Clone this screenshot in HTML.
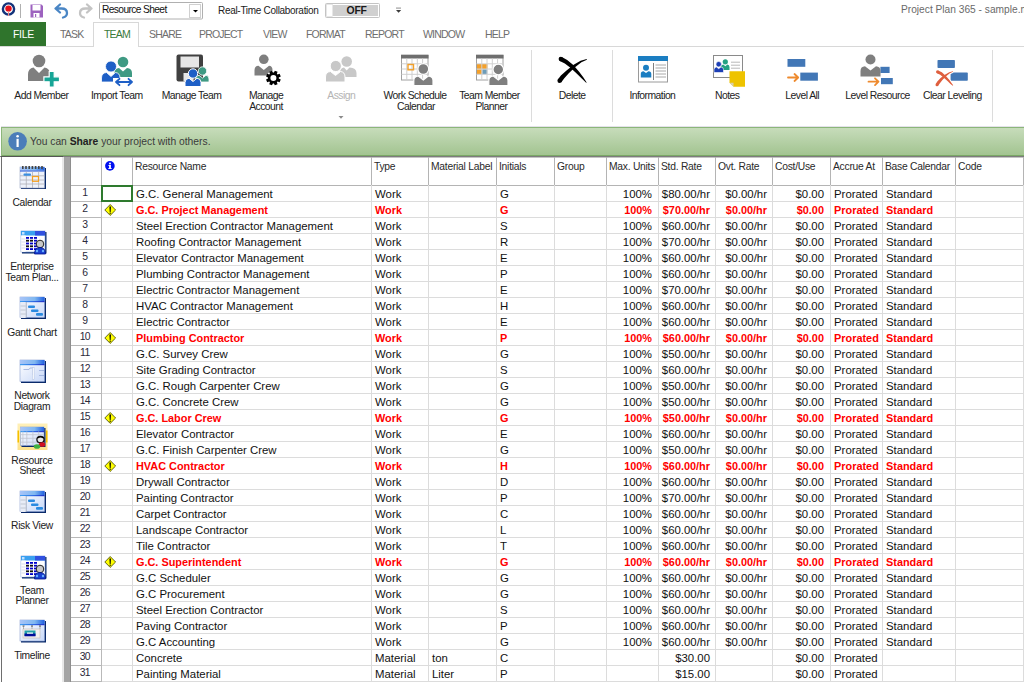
<!DOCTYPE html>
<html><head><meta charset="utf-8"><style>
html,body{margin:0;padding:0}
body{width:1024px;height:682px;overflow:hidden;position:relative;background:#fff;font-family:"Liberation Sans", sans-serif}
.t{position:absolute;white-space:nowrap;line-height:1;}
.r{position:absolute;}
.rl .c{width:200px;text-align:center;font-size:10.4px;letter-spacing:-0.55px;color:#222}
svg.r{overflow:visible}
</style></head><body>
<!-- title bar -->
<svg class="r" style="left:0;top:0" width="1024" height="130" viewBox="0 0 1024 130">
  <defs>
    <linearGradient id="gbar" x1="0" y1="0" x2="0" y2="1"><stop offset="0" stop-color="#c8ddbc"/><stop offset="1" stop-color="#a1c38f"/></linearGradient>
  </defs>
  <!-- logo -->
  <circle cx="8.5" cy="9" r="5.6" fill="none" stroke="#13337a" stroke-width="2.4"/>
  <circle cx="8.5" cy="8.6" r="3.2" fill="#e8101a"/>
  <rect x="8" y="11" width="1.1" height="5" fill="#e98a8a"/>
  <rect x="20" y="4" width="1" height="14" fill="#b0b0b0"/>
  <!-- save -->
  <path d="M30.5 4.5 h11 l1.5 1.5 v11.5 h-12.5 z" fill="#9d62bf"/>
  <rect x="32.5" y="5" width="8" height="5.5" fill="#fff"/>
  <rect x="33.5" y="13" width="6" height="4.5" fill="#fff"/>
  <rect x="35" y="14" width="1.2" height="3" fill="#9d62bf"/>
  <!-- undo -->
  <path d="M55.5 8.5 L60 4.5 M55.5 8.5 L60 12.5 M56 8.5 H61.5 C66 8.5 67 11 67 13 C67 15.5 65 17 63 17.5" fill="none" stroke="#4a86c5" stroke-width="2.3" stroke-linecap="round"/>
  <!-- redo -->
  <path d="M91.5 8.5 L87 4.5 M91.5 8.5 L87 12.5 M91 8.5 H85.5 C81 8.5 80 11 80 13 C80 15.5 82 17 84 17.5" fill="none" stroke="#c4c4c4" stroke-width="2.3" stroke-linecap="round"/>
  <!-- dropdown -->
  <rect x="99.5" y="2.5" width="103" height="16.5" rx="1" fill="#fff" stroke="#b0b0b0"/>
  <rect x="189.5" y="4.5" width="11" height="13" fill="#fff" stroke="#d0d0d0"/>
  <path d="M193 10 h5 l-2.5 2.5 z" fill="#000"/>
  <!-- toggle -->
  <rect x="325.5" y="3.5" width="54" height="14" rx="1" fill="#fff" stroke="#c4c4c4"/>
  <rect x="333" y="5" width="45" height="11" fill="#d0d0d0"/>
  <rect x="326.5" y="4.5" width="6" height="12" fill="#fff" stroke="#d8d8d8" stroke-width="0.6"/>
  <!-- qat customize -->
  <rect x="396" y="7.5" width="5" height="1.2" fill="#a0a0a0"/>
  <path d="M396 10 h5.2 l-2.6 2.8 z" fill="#3c3c3c"/>
  <!-- tabs -->
  <rect x="0" y="22" width="46" height="24" fill="#2f742c"/>
  <rect x="0" y="46" width="93" height="1" fill="#d8d8d8"/>
  <rect x="138" y="46" width="886" height="1" fill="#d8d8d8"/>
  <rect x="93" y="22" width="1" height="25" fill="#d8d8d8"/>
  <rect x="138" y="22" width="1" height="25" fill="#d8d8d8"/>
  <rect x="93" y="22" width="46" height="1" fill="#d8d8d8"/>
  <!-- ribbon separators -->
  <rect x="531" y="50" width="1" height="72" fill="#dcdcdc"/>
  <rect x="612" y="50" width="1" height="72" fill="#dcdcdc"/>
  <rect x="992" y="50" width="1" height="72" fill="#dcdcdc"/>

  <!-- Add Member -->
  <circle cx="39" cy="61" r="6.3" fill="#7f7f7f"/>
  <path d="M28 81 V74.5 Q28 68.5 33.5 67.5 L39 73 L44.5 67.5 Q50 68.5 50 74.5 V81 Z" fill="#7f7f7f"/>
  <path d="M49.2 71.5 h5 v5.3 h5.3 v5 h-5.3 v5.3 h-5 v-5.3 h-5.3 v-5 h5.3 z" fill="#17a596" stroke="#fff" stroke-width="1.2"/>
  <!-- Import Team -->
  <circle cx="123" cy="62" r="5.3" fill="#3f9a83"/>
  <path d="M114.5 77 V73 Q114.5 68.5 119 68 L123 71.5 L127 68 Q132 68.5 132 73 V77 Z" fill="#3f9a83"/>
  <circle cx="111" cy="66.5" r="5.5" fill="#1e5fc6" stroke="#fff" stroke-width="0.8"/>
  <path d="M101.5 82 V78 Q101.5 73 106.5 72.5 L111 76.5 L115.5 72.5 Q120 73 120 78 V82 Z" fill="#1e5fc6" stroke="#fff" stroke-width="0.8"/>
  <rect x="113" y="78" width="22" height="8" fill="#fff"/>
  <path d="M116 82 H132 M119.5 78.8 L116 82 L119.5 85.2 M128.5 78.8 L132 82 L128.5 85.2" fill="none" stroke="#1e5fc6" stroke-width="1.8" stroke-linecap="round" stroke-linejoin="round"/>
  <!-- Manage Team -->
  <rect x="176.5" y="54.5" width="26.5" height="27" rx="2" fill="#404040"/>
  <rect x="180.5" y="56.5" width="18.5" height="11" fill="#e6e6e6"/>
  <rect x="183.5" y="73" width="10" height="8.5" fill="#e6e6e6"/>
  <circle cx="202.5" cy="71" r="4.2" fill="#3f9a83" stroke="#fff" stroke-width="0.8"/>
  <path d="M195.5 82 V79 Q195.5 75.5 199 75.3 L202.5 78 L206 75.3 Q209 75.5 209 79 V82 Z" fill="#3f9a83" stroke="#fff" stroke-width="0.8"/>
  <circle cx="193" cy="73.5" r="4.7" fill="#1e5fc6" stroke="#fff" stroke-width="1"/>
  <path d="M185 86.5 V82.5 Q185 78.5 189 78.2 L193 81.5 L197 78.2 Q201 78.5 201 82.5 V86.5 Z" fill="#1e5fc6" stroke="#fff" stroke-width="1"/>
  <!-- Manage Account -->
  <circle cx="263.8" cy="59.3" r="4.8" fill="#7f7f7f"/>
  <path d="M254.5 75.5 V70 Q254.5 66 258.5 65.8 L263.8 70 L269 65.8 Q272.5 66 272.5 70 V75.5 Z" fill="#7f7f7f"/>
  <g transform="translate(273.4 78)">
    <circle r="7.2" fill="#fff"/>
    <path d="M0.50 -5.38 L1.44 -7.36 L4.19 -6.22 L3.45 -4.16 L4.16 -3.45 L6.22 -4.19 L7.36 -1.44 L5.38 -0.50 L5.38 0.50 L7.36 1.44 L6.22 4.19 L4.16 3.45 L3.45 4.16 L4.19 6.22 L1.44 7.36 L0.50 5.38 L-0.50 5.38 L-1.44 7.36 L-4.19 6.22 L-3.45 4.16 L-4.16 3.45 L-6.22 4.19 L-7.36 1.44 L-5.38 0.50 L-5.38 -0.50 L-7.36 -1.44 L-6.22 -4.19 L-4.16 -3.45 L-3.45 -4.16 L-4.19 -6.22 L-1.44 -7.36 L-0.50 -5.38 Z" fill="#000"/>
    <circle r="3" fill="#fff"/>
  </g>
  <!-- Assign -->
  <circle cx="346.7" cy="61.5" r="5.3" fill="#c8c8c8"/>
  <path d="M340 77 V73 Q340 68 344 67.6 L346.7 70.5 L349.5 67.6 Q356.5 68 356.5 73 V77 Z" fill="#c8c8c8"/>
  <circle cx="335.8" cy="66" r="5.6" fill="#c8c8c8" stroke="#fff" stroke-width="1"/>
  <path d="M325.5 82 V77 Q325.5 72 330.5 71.5 L335.5 75.5 L340.5 71.5 Q345 72 345 77 V82 Z" fill="#c8c8c8" stroke="#fff" stroke-width="1"/>
  <path d="M338.5 116 h5 l-2.5 2.8 z" fill="#8a8a8a"/>
  <!-- Work Schedule Calendar -->
  <rect x="401.5" y="55" width="26.5" height="25" fill="#fff" stroke="#a0a0a0" stroke-width="1"/>
  <rect x="401" y="55" width="27.5" height="3.5" fill="#6e6e6e"/>
  <path d="M406.8 58.5 V80 M412 58.5 V80 M417.3 58.5 V80 M422.6 58.5 V80 M401.5 63.8 H428 M401.5 69 H428 M401.5 74.3 H428" stroke="#cfcfcf" stroke-width="1"/>
  <rect x="408" y="64.5" width="5.5" height="5.3" fill="none" stroke="#f2a02a" stroke-width="1.4"/>
  <circle cx="423.3" cy="69" r="5.4" fill="#7f7f7f" stroke="#fff" stroke-width="1.2"/>
  <path d="M413.8 85.5 V80.5 Q413.8 76.5 418.3 76 L423.3 80 L428.3 76 Q433 76.5 433 80.5 V85.5 Z" fill="#7f7f7f" stroke="#fff" stroke-width="1.2"/>
  <!-- Team Member Planner -->
  <rect x="476.5" y="55" width="26.5" height="25" fill="#fff" stroke="#a0a0a0" stroke-width="1"/>
  <rect x="476" y="55" width="27.5" height="3.5" fill="#6e6e6e"/>
  <rect x="477" y="64" width="10.5" height="5" fill="#f4a02a"/>
  <rect x="477" y="69.3" width="5" height="5" fill="#f4a02a"/>
  <rect x="482.3" y="69.3" width="5" height="5" fill="#6d9cb8"/>
  <path d="M481.8 58.5 V80 M487 58.5 V80 M492.3 58.5 V80 M497.6 58.5 V80 M476.5 63.8 H503 M476.5 69 H503 M476.5 74.3 H503" stroke="#d0d0d0" stroke-width="1"/>
  <circle cx="498.3" cy="69.5" r="5.3" fill="#7f7f7f" stroke="#fff" stroke-width="1.2"/>
  <path d="M488.8 85.5 V80.5 Q488.8 76.5 493.3 76 L498.3 80 L503.3 76 Q508 76.5 508 80.5 V85.5 Z" fill="#7f7f7f" stroke="#fff" stroke-width="1.2"/>
  <!-- Delete -->
  <path d="M559.76 60.94 L564.83 63.54 L570.72 67.90 L576.90 73.82 L581.74 78.45 L586.13 82.82 L586.67 82.38 L583.26 77.15 L579.10 71.78 L573.28 65.10 L567.17 60.06 L561.84 57.06 Z" fill="#000"/><circle cx="560.8" cy="59" r="2.2" fill="#000"/><path d="M586.67 58.97 L580.60 60.85 L573.65 64.69 L566.24 70.65 L560.90 75.56 L557.85 79.47 L561.35 82.13 L564.10 78.44 L568.76 73.35 L575.35 66.91 L581.40 62.35 L586.93 59.63 Z" fill="#000"/><circle cx="559.6" cy="80.8" r="2.2" fill="#000"/>
  <!-- Information -->
  <rect x="638.5" y="56.5" width="29" height="25.5" fill="#fff" stroke="#9a9a9a"/>
  <rect x="638" y="56" width="30" height="5" fill="#1b7ec2"/>
  <circle cx="646" cy="67.8" r="3" fill="#1b7ec2"/>
  <path d="M640.8 77.5 V74 Q640.8 71.3 643.5 71.2 L646 73 L648.5 71.2 Q651.3 71.3 651.3 74 V77.5 Z" fill="#1b7ec2"/>
  <rect x="653" y="63" width="1" height="17" fill="#808080"/>
  <path d="M655.5 65 H666 M655.5 68 H666 M655.5 71 H666 M655.5 74 H666 M655.5 77 H666" stroke="#a8a8a8" stroke-width="1"/>
  <!-- Notes -->
  <rect x="713.5" y="55.5" width="29" height="22" fill="#fff" stroke="#8a8a8a"/>
  <circle cx="725.3" cy="61.8" r="2.6" fill="#24a182"/>
  <path d="M721 70 V67 Q721 64.8 723.3 64.6 L725.3 66.3 L727.3 64.6 Q729.5 64.8 729.5 67 V70 Z" fill="#24a182"/>
  <circle cx="718.7" cy="64.2" r="2.7" fill="#1d3fb5" stroke="#fff" stroke-width="0.6"/>
  <path d="M714 72.5 V69.5 Q714 67.2 716.5 67 L718.7 68.7 L721 67 Q723.5 67.2 723.5 69.5 V72.5 Z" fill="#1d3fb5" stroke="#fff" stroke-width="0.6"/>
  <path d="M731 62.2 H740 M731 65.2 H740 M731 68.2 H740" stroke="#b8b8b8" stroke-width="1"/>
  <path d="M729.5 71.2 H745 V86.7 H733.5 L729.5 82.7 Z" fill="#eec300"/>
  <path d="M729.5 82.7 H733.5 V86.7 Z" fill="#d8d0b0"/>
  <!-- Level All -->
  <rect x="787.5" y="59" width="17.8" height="7.8" fill="#4277b6"/>
  <rect x="800.3" y="72.6" width="17.6" height="8.1" fill="#4277b6"/>
  <path d="M788 77.5 H798 M794.5 74 L798.2 77.5 L794.5 81" fill="none" stroke="#ee8a2e" stroke-width="1.8" stroke-linecap="round" stroke-linejoin="round"/>
  <!-- Level Resource -->
  <rect x="880.4" y="66.8" width="9.2" height="6.2" fill="#4277b6"/>
  <rect x="881" y="78" width="11.8" height="6.2" fill="#4277b6"/>
  <circle cx="870.5" cy="59.5" r="5" fill="#7f7f7f"/>
  <path d="M860.5 76.5 V71 Q860.5 66.5 865 66.2 L870.5 70.5 L876 66.2 Q880.5 66.5 880.5 71 V76.5 Z" fill="#7f7f7f"/>
  <path d="M868.5 81.7 H878.3 M875 78.3 L878.5 81.7 L875 85.1" fill="none" stroke="#ee8a2e" stroke-width="1.8" stroke-linecap="round" stroke-linejoin="round"/>
  <!-- Clear Leveling -->
  <rect x="937.5" y="60" width="17.4" height="8" rx="0.8" fill="#4277b6"/>
  <rect x="950.6" y="72.6" width="17.2" height="8.1" rx="0.8" fill="#4277b6"/>
  <path d="M936.41 74.05 L939.60 75.51 L943.43 78.68 L947.03 81.86 L949.77 84.60 L952.12 86.38 L953.88 84.62 L952.23 82.40 L949.97 79.14 L946.57 75.32 L942.40 71.49 L938.59 69.55 Z" fill="#fff"/><circle cx="937.5" cy="71.8" r="2.5" fill="#fff"/><path d="M952.59 70.42 L948.76 71.38 L944.27 73.92 L939.87 77.37 L936.52 80.97 L934.91 83.43 L939.09 86.17 L940.48 84.03 L943.13 80.63 L946.73 77.08 L950.24 74.22 L953.41 72.78 Z" fill="#fff"/><circle cx="937" cy="84.8" r="2.5" fill="#fff"/><path d="M936.84 73.15 L940.17 74.69 L944.11 77.95 L947.77 81.18 L950.52 83.93 L952.82 85.68 L953.18 85.32 L951.48 83.07 L949.23 79.82 L945.89 76.05 L941.83 72.31 L938.16 70.45 Z" fill="#df5f3e"/><circle cx="937.5" cy="71.8" r="1.5" fill="#df5f3e"/><path d="M952.92 71.36 L949.22 72.27 L944.89 74.71 L940.58 78.08 L937.31 81.58 L935.74 83.98 L938.26 85.62 L939.69 83.42 L942.42 79.92 L946.11 76.29 L949.78 73.33 L953.08 71.84 Z" fill="#df5f3e"/><circle cx="937" cy="84.8" r="1.5" fill="#df5f3e"/>

  <!-- info bar -->
  <rect x="1" y="126" width="1023" height="1" fill="#e4e2ea"/>
  <rect x="1" y="127" width="1023" height="29" fill="url(#gbar)"/>
  <rect x="1" y="127" width="1023" height="1" fill="#8cb67a"/>
  <rect x="1" y="155" width="1023" height="1" fill="#7aa865"/>
  <rect x="1" y="127" width="1" height="29" fill="#8cb67a"/>
  <circle cx="17.6" cy="141.3" r="9.3" fill="#4b7db9"/>
  <circle cx="17.6" cy="136.3" r="1.3" fill="#fff"/>
  <rect x="16.5" y="138.8" width="2.2" height="8.2" fill="#fff"/>
</svg>
<div class="t" style="left:102px;top:5px;font-size:10.2px;color:#111;letter-spacing:-0.6px">Resource Sheet</div>
<div class="t" style="left:218px;top:6.2px;font-size:10px;color:#222;letter-spacing:-0.3px">Real-Time Collaboration</div>
<div class="t" style="left:346.5px;top:5.9px;font-size:10.4px;color:#1a1a1a;font-weight:bold;letter-spacing:-0.2px">OFF</div>
<div class="t" style="left:901px;top:4.8px;font-size:10.2px;color:#6a6a6a">Project Plan 365 - sample.m</div>
<div class="t" style="left:13px;top:29px;font-size:10.5px;color:#fff;letter-spacing:-0.3px">FILE</div>
<div class="t" style="left:60px;top:29px;font-size:10.5px;color:#6e6e6e;letter-spacing:-0.8px">TASK</div>
<div class="t" style="left:104px;top:29px;font-size:10.5px;color:#3b7a3a;letter-spacing:-0.8px">TEAM</div>
<div class="t" style="left:149px;top:29px;font-size:10.5px;color:#6e6e6e;letter-spacing:-0.8px">SHARE</div>
<div class="t" style="left:199px;top:29px;font-size:10.5px;color:#6e6e6e;letter-spacing:-0.8px">PROJECT</div>
<div class="t" style="left:263px;top:29px;font-size:10.5px;color:#6e6e6e;letter-spacing:-0.8px">VIEW</div>
<div class="t" style="left:306px;top:29px;font-size:10.5px;color:#6e6e6e;letter-spacing:-0.8px">FORMAT</div>
<div class="t" style="left:365px;top:29px;font-size:10.5px;color:#6e6e6e;letter-spacing:-0.8px">REPORT</div>
<div class="t" style="left:423px;top:29px;font-size:10.5px;color:#6e6e6e;letter-spacing:-0.8px">WINDOW</div>
<div class="t" style="left:485px;top:29px;font-size:10.5px;color:#6e6e6e;letter-spacing:-0.8px">HELP</div>
<div class="rl">
<div class="t c" style="left:-58.7px;top:91px">Add Member</div>
<div class="t c" style="left:16.8px;top:91px">Import Team</div>
<div class="t c" style="left:91.5px;top:91px">Manage Team</div>
<div class="t c" style="left:166px;top:91px">Manage</div>
<div class="t c" style="left:166px;top:101.7px">Account</div>
<div class="t c" style="left:241.3px;top:91px;color:#b4b4b4">Assign</div>
<div class="t c" style="left:315px;top:91px">Work Schedule</div>
<div class="t c" style="left:316px;top:101.7px">Calendar</div>
<div class="t c" style="left:389.4px;top:91px">Team Member</div>
<div class="t c" style="left:391.4px;top:101.7px">Planner</div>
<div class="t c" style="left:472.2px;top:91px">Delete</div>
<div class="t c" style="left:552.4px;top:91px">Information</div>
<div class="t c" style="left:627.3px;top:91px">Notes</div>
<div class="t c" style="left:702.2px;top:91px">Level All</div>
<div class="t c" style="left:777.6px;top:91px">Level Resource</div>
<div class="t c" style="left:852.4px;top:91px">Clear Leveling</div>
</div>
<div class="t" style="left:30px;top:137.4px;font-size:10.3px;color:#3a3a3a">You can <b style="color:#222">Share</b> your project with others.</div>

<div class="r" style="left:71px;top:157px;width:953px;height:525px;background:#fff;"></div>
<div class="r" style="left:0px;top:156px;width:1024px;height:1px;background:#7c7c7c;"></div>
<div class="r" style="left:70px;top:157px;width:954px;height:1px;background:#c4c4c4;"></div>
<div class="r" style="left:101px;top:201px;width:923px;height:1px;background:#dcdcdc;"></div>
<div class="r" style="left:71px;top:201px;width:30px;height:1px;background:#b9b9b9;"></div>
<div class="r" style="left:101px;top:217px;width:923px;height:1px;background:#dcdcdc;"></div>
<div class="r" style="left:71px;top:217px;width:30px;height:1px;background:#b9b9b9;"></div>
<div class="r" style="left:101px;top:233px;width:923px;height:1px;background:#dcdcdc;"></div>
<div class="r" style="left:71px;top:233px;width:30px;height:1px;background:#b9b9b9;"></div>
<div class="r" style="left:101px;top:249px;width:923px;height:1px;background:#dcdcdc;"></div>
<div class="r" style="left:71px;top:249px;width:30px;height:1px;background:#b9b9b9;"></div>
<div class="r" style="left:101px;top:265px;width:923px;height:1px;background:#dcdcdc;"></div>
<div class="r" style="left:71px;top:265px;width:30px;height:1px;background:#b9b9b9;"></div>
<div class="r" style="left:101px;top:281px;width:923px;height:1px;background:#dcdcdc;"></div>
<div class="r" style="left:71px;top:281px;width:30px;height:1px;background:#b9b9b9;"></div>
<div class="r" style="left:101px;top:297px;width:923px;height:1px;background:#dcdcdc;"></div>
<div class="r" style="left:71px;top:297px;width:30px;height:1px;background:#b9b9b9;"></div>
<div class="r" style="left:101px;top:313px;width:923px;height:1px;background:#dcdcdc;"></div>
<div class="r" style="left:71px;top:313px;width:30px;height:1px;background:#b9b9b9;"></div>
<div class="r" style="left:101px;top:329px;width:923px;height:1px;background:#dcdcdc;"></div>
<div class="r" style="left:71px;top:329px;width:30px;height:1px;background:#b9b9b9;"></div>
<div class="r" style="left:101px;top:345px;width:923px;height:1px;background:#dcdcdc;"></div>
<div class="r" style="left:71px;top:345px;width:30px;height:1px;background:#b9b9b9;"></div>
<div class="r" style="left:101px;top:361px;width:923px;height:1px;background:#dcdcdc;"></div>
<div class="r" style="left:71px;top:361px;width:30px;height:1px;background:#b9b9b9;"></div>
<div class="r" style="left:101px;top:377px;width:923px;height:1px;background:#dcdcdc;"></div>
<div class="r" style="left:71px;top:377px;width:30px;height:1px;background:#b9b9b9;"></div>
<div class="r" style="left:101px;top:393px;width:923px;height:1px;background:#dcdcdc;"></div>
<div class="r" style="left:71px;top:393px;width:30px;height:1px;background:#b9b9b9;"></div>
<div class="r" style="left:101px;top:409px;width:923px;height:1px;background:#dcdcdc;"></div>
<div class="r" style="left:71px;top:409px;width:30px;height:1px;background:#b9b9b9;"></div>
<div class="r" style="left:101px;top:425px;width:923px;height:1px;background:#dcdcdc;"></div>
<div class="r" style="left:71px;top:425px;width:30px;height:1px;background:#b9b9b9;"></div>
<div class="r" style="left:101px;top:441px;width:923px;height:1px;background:#dcdcdc;"></div>
<div class="r" style="left:71px;top:441px;width:30px;height:1px;background:#b9b9b9;"></div>
<div class="r" style="left:101px;top:457px;width:923px;height:1px;background:#dcdcdc;"></div>
<div class="r" style="left:71px;top:457px;width:30px;height:1px;background:#b9b9b9;"></div>
<div class="r" style="left:101px;top:473px;width:923px;height:1px;background:#dcdcdc;"></div>
<div class="r" style="left:71px;top:473px;width:30px;height:1px;background:#b9b9b9;"></div>
<div class="r" style="left:101px;top:489px;width:923px;height:1px;background:#dcdcdc;"></div>
<div class="r" style="left:71px;top:489px;width:30px;height:1px;background:#b9b9b9;"></div>
<div class="r" style="left:101px;top:505px;width:923px;height:1px;background:#dcdcdc;"></div>
<div class="r" style="left:71px;top:505px;width:30px;height:1px;background:#b9b9b9;"></div>
<div class="r" style="left:101px;top:521px;width:923px;height:1px;background:#dcdcdc;"></div>
<div class="r" style="left:71px;top:521px;width:30px;height:1px;background:#b9b9b9;"></div>
<div class="r" style="left:101px;top:537px;width:923px;height:1px;background:#dcdcdc;"></div>
<div class="r" style="left:71px;top:537px;width:30px;height:1px;background:#b9b9b9;"></div>
<div class="r" style="left:101px;top:553px;width:923px;height:1px;background:#dcdcdc;"></div>
<div class="r" style="left:71px;top:553px;width:30px;height:1px;background:#b9b9b9;"></div>
<div class="r" style="left:101px;top:569px;width:923px;height:1px;background:#dcdcdc;"></div>
<div class="r" style="left:71px;top:569px;width:30px;height:1px;background:#b9b9b9;"></div>
<div class="r" style="left:101px;top:585px;width:923px;height:1px;background:#dcdcdc;"></div>
<div class="r" style="left:71px;top:585px;width:30px;height:1px;background:#b9b9b9;"></div>
<div class="r" style="left:101px;top:601px;width:923px;height:1px;background:#dcdcdc;"></div>
<div class="r" style="left:71px;top:601px;width:30px;height:1px;background:#b9b9b9;"></div>
<div class="r" style="left:101px;top:617px;width:923px;height:1px;background:#dcdcdc;"></div>
<div class="r" style="left:71px;top:617px;width:30px;height:1px;background:#b9b9b9;"></div>
<div class="r" style="left:101px;top:633px;width:923px;height:1px;background:#dcdcdc;"></div>
<div class="r" style="left:71px;top:633px;width:30px;height:1px;background:#b9b9b9;"></div>
<div class="r" style="left:101px;top:649px;width:923px;height:1px;background:#dcdcdc;"></div>
<div class="r" style="left:71px;top:649px;width:30px;height:1px;background:#b9b9b9;"></div>
<div class="r" style="left:101px;top:665px;width:923px;height:1px;background:#dcdcdc;"></div>
<div class="r" style="left:71px;top:665px;width:30px;height:1px;background:#b9b9b9;"></div>
<div class="r" style="left:101px;top:681px;width:923px;height:1px;background:#dcdcdc;"></div>
<div class="r" style="left:71px;top:681px;width:30px;height:1px;background:#b9b9b9;"></div>
<div class="r" style="left:71px;top:185px;width:953px;height:1px;background:#b4b4b4;"></div>
<div class="r" style="left:101px;top:157px;width:1px;height:28px;background:#b4b4b4;"></div>
<div class="r" style="left:101px;top:185px;width:1px;height:497px;background:#b9b9b9;"></div>
<div class="r" style="left:132px;top:157px;width:1px;height:28px;background:#b4b4b4;"></div>
<div class="r" style="left:132px;top:185px;width:1px;height:497px;background:#dcdcdc;"></div>
<div class="r" style="left:371px;top:157px;width:1px;height:28px;background:#b4b4b4;"></div>
<div class="r" style="left:371px;top:185px;width:1px;height:497px;background:#dcdcdc;"></div>
<div class="r" style="left:428px;top:157px;width:1px;height:28px;background:#b4b4b4;"></div>
<div class="r" style="left:428px;top:185px;width:1px;height:497px;background:#dcdcdc;"></div>
<div class="r" style="left:496px;top:157px;width:1px;height:28px;background:#b4b4b4;"></div>
<div class="r" style="left:496px;top:185px;width:1px;height:497px;background:#dcdcdc;"></div>
<div class="r" style="left:554px;top:157px;width:1px;height:28px;background:#b4b4b4;"></div>
<div class="r" style="left:554px;top:185px;width:1px;height:497px;background:#dcdcdc;"></div>
<div class="r" style="left:606px;top:157px;width:1px;height:28px;background:#b4b4b4;"></div>
<div class="r" style="left:606px;top:185px;width:1px;height:497px;background:#dcdcdc;"></div>
<div class="r" style="left:658px;top:157px;width:1px;height:28px;background:#b4b4b4;"></div>
<div class="r" style="left:658px;top:185px;width:1px;height:497px;background:#dcdcdc;"></div>
<div class="r" style="left:715px;top:157px;width:1px;height:28px;background:#b4b4b4;"></div>
<div class="r" style="left:715px;top:185px;width:1px;height:497px;background:#dcdcdc;"></div>
<div class="r" style="left:772px;top:157px;width:1px;height:28px;background:#b4b4b4;"></div>
<div class="r" style="left:772px;top:185px;width:1px;height:497px;background:#dcdcdc;"></div>
<div class="r" style="left:830px;top:157px;width:1px;height:28px;background:#b4b4b4;"></div>
<div class="r" style="left:830px;top:185px;width:1px;height:497px;background:#dcdcdc;"></div>
<div class="r" style="left:882px;top:157px;width:1px;height:28px;background:#b4b4b4;"></div>
<div class="r" style="left:882px;top:185px;width:1px;height:497px;background:#dcdcdc;"></div>
<div class="r" style="left:955px;top:157px;width:1px;height:28px;background:#b4b4b4;"></div>
<div class="r" style="left:955px;top:185px;width:1px;height:497px;background:#dcdcdc;"></div>
<div class="r" style="left:1023px;top:157px;width:1px;height:28px;background:#b4b4b4;"></div>
<div class="r" style="left:1023px;top:185px;width:1px;height:497px;background:#dcdcdc;"></div>
<div class="t" style="left:135px;top:161.88px;font-size:10.3px;color:#2a2a2a;font-weight:normal;letter-spacing:-0.25px">Resource Name</div>
<div class="t" style="left:374px;top:161.88px;font-size:10.3px;color:#2a2a2a;font-weight:normal;letter-spacing:-0.25px">Type</div>
<div class="t" style="left:431px;top:161.88px;font-size:10.3px;color:#2a2a2a;font-weight:normal;letter-spacing:-0.25px">Material Label</div>
<div class="t" style="left:499px;top:161.88px;font-size:10.3px;color:#2a2a2a;font-weight:normal;letter-spacing:-0.25px">Initials</div>
<div class="t" style="left:557px;top:161.88px;font-size:10.3px;color:#2a2a2a;font-weight:normal;letter-spacing:-0.25px">Group</div>
<div class="t" style="left:609px;top:161.88px;font-size:10.3px;color:#2a2a2a;font-weight:normal;letter-spacing:-0.25px">Max. Units</div>
<div class="t" style="left:661px;top:161.88px;font-size:10.3px;color:#2a2a2a;font-weight:normal;letter-spacing:-0.25px">Std. Rate</div>
<div class="t" style="left:718px;top:161.88px;font-size:10.3px;color:#2a2a2a;font-weight:normal;letter-spacing:-0.25px">Ovt. Rate</div>
<div class="t" style="left:775px;top:161.88px;font-size:10.3px;color:#2a2a2a;font-weight:normal;letter-spacing:-0.25px">Cost/Use</div>
<div class="t" style="left:833px;top:161.88px;font-size:10.3px;color:#2a2a2a;font-weight:normal;letter-spacing:-0.25px">Accrue At</div>
<div class="t" style="left:885px;top:161.88px;font-size:10.3px;color:#2a2a2a;font-weight:normal;letter-spacing:-0.25px">Base Calendar</div>
<div class="t" style="left:958px;top:161.88px;font-size:10.3px;color:#2a2a2a;font-weight:normal;letter-spacing:-0.25px">Code</div>
<svg class="r" style="left:105px;top:160.6px" width="10" height="10" viewBox="0 0 10 10"><circle cx="4.9" cy="4.9" r="4.8" fill="#0010f0"/><rect x="4.1" y="4" width="1.8" height="3.8" fill="#fff"/><circle cx="5" cy="2.5" r="0.95" fill="#fff"/><rect x="3.3" y="7" width="3.4" height="0.9" fill="#fff"/><rect x="3.4" y="4" width="1.5" height="0.9" fill="#fff"/></svg>
<div class="t" style="left:-15.200000000000003px;width:200px;text-align:center;top:187.90px;font-size:10.4px;color:#2a2a3a;font-weight:normal;letter-spacing:-0.7px">1</div>
<div class="t" style="left:136px;top:188.85px;font-size:11.4px;color:#111;font-weight:normal;">G.C. General Management</div>
<div class="t" style="left:375px;top:188.85px;font-size:11.4px;color:#111;font-weight:normal;">Work</div>
<div class="t" style="left:500px;top:188.85px;font-size:11.4px;color:#111;font-weight:normal;">G</div>
<div class="t" style="right:372px;top:188.85px;font-size:11.4px;color:#111;font-weight:normal;">100%</div>
<div class="t" style="right:314px;top:188.85px;font-size:11.4px;color:#111;font-weight:normal;">$80.00/hr</div>
<div class="t" style="right:257px;top:188.85px;font-size:11.4px;color:#111;font-weight:normal;">$0.00/hr</div>
<div class="t" style="right:200px;top:188.85px;font-size:11.4px;color:#111;font-weight:normal;">$0.00</div>
<div class="t" style="left:834px;top:188.85px;font-size:11.4px;color:#111;font-weight:normal;">Prorated</div>
<div class="t" style="left:886px;top:188.85px;font-size:11.4px;color:#111;font-weight:normal;">Standard</div>
<div class="t" style="left:-15.200000000000003px;width:200px;text-align:center;top:203.90px;font-size:10.4px;color:#2a2a3a;font-weight:normal;letter-spacing:-0.7px">2</div>
<div class="t" style="left:136px;top:204.77px;font-size:10.9px;color:#ff0000;font-weight:bold;">G.C. Project Management</div>
<div class="t" style="left:375px;top:204.77px;font-size:10.9px;color:#ff0000;font-weight:bold;">Work</div>
<div class="t" style="left:500px;top:204.77px;font-size:10.9px;color:#ff0000;font-weight:bold;">G</div>
<div class="t" style="right:372px;top:204.77px;font-size:10.9px;color:#ff0000;font-weight:bold;">100%</div>
<div class="t" style="right:314px;top:204.77px;font-size:10.9px;color:#ff0000;font-weight:bold;">$70.00/hr</div>
<div class="t" style="right:257px;top:204.77px;font-size:10.9px;color:#ff0000;font-weight:bold;">$0.00/hr</div>
<div class="t" style="right:200px;top:204.77px;font-size:10.9px;color:#ff0000;font-weight:bold;">$0.00</div>
<div class="t" style="left:834px;top:204.77px;font-size:10.9px;color:#ff0000;font-weight:bold;">Prorated</div>
<div class="t" style="left:886px;top:204.77px;font-size:10.9px;color:#ff0000;font-weight:bold;">Standard</div>
<svg class="r" style="left:104px;top:204px" width="12" height="12" viewBox="0 0 12 12"><path d="M6.2 0.5 L11.6 6 L6.2 11.4 L0.8 6 Z" fill="#ffff00" stroke="#545410" stroke-width="0.9"/><path d="M5.4 2.6 h1.6 l-0.35 5.4 h-0.9 z" fill="#000"/><rect x="5.6" y="8.6" width="1.2" height="1.2" fill="#000"/></svg>
<div class="t" style="left:-15.200000000000003px;width:200px;text-align:center;top:219.90px;font-size:10.4px;color:#2a2a3a;font-weight:normal;letter-spacing:-0.7px">3</div>
<div class="t" style="left:136px;top:220.85px;font-size:11.4px;color:#111;font-weight:normal;">Steel Erection Contractor Management</div>
<div class="t" style="left:375px;top:220.85px;font-size:11.4px;color:#111;font-weight:normal;">Work</div>
<div class="t" style="left:500px;top:220.85px;font-size:11.4px;color:#111;font-weight:normal;">S</div>
<div class="t" style="right:372px;top:220.85px;font-size:11.4px;color:#111;font-weight:normal;">100%</div>
<div class="t" style="right:314px;top:220.85px;font-size:11.4px;color:#111;font-weight:normal;">$60.00/hr</div>
<div class="t" style="right:257px;top:220.85px;font-size:11.4px;color:#111;font-weight:normal;">$0.00/hr</div>
<div class="t" style="right:200px;top:220.85px;font-size:11.4px;color:#111;font-weight:normal;">$0.00</div>
<div class="t" style="left:834px;top:220.85px;font-size:11.4px;color:#111;font-weight:normal;">Prorated</div>
<div class="t" style="left:886px;top:220.85px;font-size:11.4px;color:#111;font-weight:normal;">Standard</div>
<div class="t" style="left:-15.200000000000003px;width:200px;text-align:center;top:235.90px;font-size:10.4px;color:#2a2a3a;font-weight:normal;letter-spacing:-0.7px">4</div>
<div class="t" style="left:136px;top:236.85px;font-size:11.4px;color:#111;font-weight:normal;">Roofing Contractor Management</div>
<div class="t" style="left:375px;top:236.85px;font-size:11.4px;color:#111;font-weight:normal;">Work</div>
<div class="t" style="left:500px;top:236.85px;font-size:11.4px;color:#111;font-weight:normal;">R</div>
<div class="t" style="right:372px;top:236.85px;font-size:11.4px;color:#111;font-weight:normal;">100%</div>
<div class="t" style="right:314px;top:236.85px;font-size:11.4px;color:#111;font-weight:normal;">$70.00/hr</div>
<div class="t" style="right:257px;top:236.85px;font-size:11.4px;color:#111;font-weight:normal;">$0.00/hr</div>
<div class="t" style="right:200px;top:236.85px;font-size:11.4px;color:#111;font-weight:normal;">$0.00</div>
<div class="t" style="left:834px;top:236.85px;font-size:11.4px;color:#111;font-weight:normal;">Prorated</div>
<div class="t" style="left:886px;top:236.85px;font-size:11.4px;color:#111;font-weight:normal;">Standard</div>
<div class="t" style="left:-15.200000000000003px;width:200px;text-align:center;top:251.90px;font-size:10.4px;color:#2a2a3a;font-weight:normal;letter-spacing:-0.7px">5</div>
<div class="t" style="left:136px;top:252.85px;font-size:11.4px;color:#111;font-weight:normal;">Elevator Contractor Management</div>
<div class="t" style="left:375px;top:252.85px;font-size:11.4px;color:#111;font-weight:normal;">Work</div>
<div class="t" style="left:500px;top:252.85px;font-size:11.4px;color:#111;font-weight:normal;">E</div>
<div class="t" style="right:372px;top:252.85px;font-size:11.4px;color:#111;font-weight:normal;">100%</div>
<div class="t" style="right:314px;top:252.85px;font-size:11.4px;color:#111;font-weight:normal;">$60.00/hr</div>
<div class="t" style="right:257px;top:252.85px;font-size:11.4px;color:#111;font-weight:normal;">$0.00/hr</div>
<div class="t" style="right:200px;top:252.85px;font-size:11.4px;color:#111;font-weight:normal;">$0.00</div>
<div class="t" style="left:834px;top:252.85px;font-size:11.4px;color:#111;font-weight:normal;">Prorated</div>
<div class="t" style="left:886px;top:252.85px;font-size:11.4px;color:#111;font-weight:normal;">Standard</div>
<div class="t" style="left:-15.200000000000003px;width:200px;text-align:center;top:267.90px;font-size:10.4px;color:#2a2a3a;font-weight:normal;letter-spacing:-0.7px">6</div>
<div class="t" style="left:136px;top:268.85px;font-size:11.4px;color:#111;font-weight:normal;">Plumbing Contractor Management</div>
<div class="t" style="left:375px;top:268.85px;font-size:11.4px;color:#111;font-weight:normal;">Work</div>
<div class="t" style="left:500px;top:268.85px;font-size:11.4px;color:#111;font-weight:normal;">P</div>
<div class="t" style="right:372px;top:268.85px;font-size:11.4px;color:#111;font-weight:normal;">100%</div>
<div class="t" style="right:314px;top:268.85px;font-size:11.4px;color:#111;font-weight:normal;">$60.00/hr</div>
<div class="t" style="right:257px;top:268.85px;font-size:11.4px;color:#111;font-weight:normal;">$0.00/hr</div>
<div class="t" style="right:200px;top:268.85px;font-size:11.4px;color:#111;font-weight:normal;">$0.00</div>
<div class="t" style="left:834px;top:268.85px;font-size:11.4px;color:#111;font-weight:normal;">Prorated</div>
<div class="t" style="left:886px;top:268.85px;font-size:11.4px;color:#111;font-weight:normal;">Standard</div>
<div class="t" style="left:-15.200000000000003px;width:200px;text-align:center;top:283.90px;font-size:10.4px;color:#2a2a3a;font-weight:normal;letter-spacing:-0.7px">7</div>
<div class="t" style="left:136px;top:284.85px;font-size:11.4px;color:#111;font-weight:normal;">Electric Contractor Management</div>
<div class="t" style="left:375px;top:284.85px;font-size:11.4px;color:#111;font-weight:normal;">Work</div>
<div class="t" style="left:500px;top:284.85px;font-size:11.4px;color:#111;font-weight:normal;">E</div>
<div class="t" style="right:372px;top:284.85px;font-size:11.4px;color:#111;font-weight:normal;">100%</div>
<div class="t" style="right:314px;top:284.85px;font-size:11.4px;color:#111;font-weight:normal;">$70.00/hr</div>
<div class="t" style="right:257px;top:284.85px;font-size:11.4px;color:#111;font-weight:normal;">$0.00/hr</div>
<div class="t" style="right:200px;top:284.85px;font-size:11.4px;color:#111;font-weight:normal;">$0.00</div>
<div class="t" style="left:834px;top:284.85px;font-size:11.4px;color:#111;font-weight:normal;">Prorated</div>
<div class="t" style="left:886px;top:284.85px;font-size:11.4px;color:#111;font-weight:normal;">Standard</div>
<div class="t" style="left:-15.200000000000003px;width:200px;text-align:center;top:299.90px;font-size:10.4px;color:#2a2a3a;font-weight:normal;letter-spacing:-0.7px">8</div>
<div class="t" style="left:136px;top:300.85px;font-size:11.4px;color:#111;font-weight:normal;">HVAC Contractor Management</div>
<div class="t" style="left:375px;top:300.85px;font-size:11.4px;color:#111;font-weight:normal;">Work</div>
<div class="t" style="left:500px;top:300.85px;font-size:11.4px;color:#111;font-weight:normal;">H</div>
<div class="t" style="right:372px;top:300.85px;font-size:11.4px;color:#111;font-weight:normal;">100%</div>
<div class="t" style="right:314px;top:300.85px;font-size:11.4px;color:#111;font-weight:normal;">$60.00/hr</div>
<div class="t" style="right:257px;top:300.85px;font-size:11.4px;color:#111;font-weight:normal;">$0.00/hr</div>
<div class="t" style="right:200px;top:300.85px;font-size:11.4px;color:#111;font-weight:normal;">$0.00</div>
<div class="t" style="left:834px;top:300.85px;font-size:11.4px;color:#111;font-weight:normal;">Prorated</div>
<div class="t" style="left:886px;top:300.85px;font-size:11.4px;color:#111;font-weight:normal;">Standard</div>
<div class="t" style="left:-15.200000000000003px;width:200px;text-align:center;top:315.90px;font-size:10.4px;color:#2a2a3a;font-weight:normal;letter-spacing:-0.7px">9</div>
<div class="t" style="left:136px;top:316.85px;font-size:11.4px;color:#111;font-weight:normal;">Electric Contractor</div>
<div class="t" style="left:375px;top:316.85px;font-size:11.4px;color:#111;font-weight:normal;">Work</div>
<div class="t" style="left:500px;top:316.85px;font-size:11.4px;color:#111;font-weight:normal;">E</div>
<div class="t" style="right:372px;top:316.85px;font-size:11.4px;color:#111;font-weight:normal;">100%</div>
<div class="t" style="right:314px;top:316.85px;font-size:11.4px;color:#111;font-weight:normal;">$60.00/hr</div>
<div class="t" style="right:257px;top:316.85px;font-size:11.4px;color:#111;font-weight:normal;">$0.00/hr</div>
<div class="t" style="right:200px;top:316.85px;font-size:11.4px;color:#111;font-weight:normal;">$0.00</div>
<div class="t" style="left:834px;top:316.85px;font-size:11.4px;color:#111;font-weight:normal;">Prorated</div>
<div class="t" style="left:886px;top:316.85px;font-size:11.4px;color:#111;font-weight:normal;">Standard</div>
<div class="t" style="left:-15.200000000000003px;width:200px;text-align:center;top:331.90px;font-size:10.4px;color:#2a2a3a;font-weight:normal;letter-spacing:-0.7px">10</div>
<div class="t" style="left:136px;top:332.77px;font-size:10.9px;color:#ff0000;font-weight:bold;">Plumbing Contractor</div>
<div class="t" style="left:375px;top:332.77px;font-size:10.9px;color:#ff0000;font-weight:bold;">Work</div>
<div class="t" style="left:500px;top:332.77px;font-size:10.9px;color:#ff0000;font-weight:bold;">P</div>
<div class="t" style="right:372px;top:332.77px;font-size:10.9px;color:#ff0000;font-weight:bold;">100%</div>
<div class="t" style="right:314px;top:332.77px;font-size:10.9px;color:#ff0000;font-weight:bold;">$60.00/hr</div>
<div class="t" style="right:257px;top:332.77px;font-size:10.9px;color:#ff0000;font-weight:bold;">$0.00/hr</div>
<div class="t" style="right:200px;top:332.77px;font-size:10.9px;color:#ff0000;font-weight:bold;">$0.00</div>
<div class="t" style="left:834px;top:332.77px;font-size:10.9px;color:#ff0000;font-weight:bold;">Prorated</div>
<div class="t" style="left:886px;top:332.77px;font-size:10.9px;color:#ff0000;font-weight:bold;">Standard</div>
<svg class="r" style="left:104px;top:332px" width="12" height="12" viewBox="0 0 12 12"><path d="M6.2 0.5 L11.6 6 L6.2 11.4 L0.8 6 Z" fill="#ffff00" stroke="#545410" stroke-width="0.9"/><path d="M5.4 2.6 h1.6 l-0.35 5.4 h-0.9 z" fill="#000"/><rect x="5.6" y="8.6" width="1.2" height="1.2" fill="#000"/></svg>
<div class="t" style="left:-15.200000000000003px;width:200px;text-align:center;top:347.90px;font-size:10.4px;color:#2a2a3a;font-weight:normal;letter-spacing:-0.7px">11</div>
<div class="t" style="left:136px;top:348.85px;font-size:11.4px;color:#111;font-weight:normal;">G.C. Survey Crew</div>
<div class="t" style="left:375px;top:348.85px;font-size:11.4px;color:#111;font-weight:normal;">Work</div>
<div class="t" style="left:500px;top:348.85px;font-size:11.4px;color:#111;font-weight:normal;">G</div>
<div class="t" style="right:372px;top:348.85px;font-size:11.4px;color:#111;font-weight:normal;">100%</div>
<div class="t" style="right:314px;top:348.85px;font-size:11.4px;color:#111;font-weight:normal;">$50.00/hr</div>
<div class="t" style="right:257px;top:348.85px;font-size:11.4px;color:#111;font-weight:normal;">$0.00/hr</div>
<div class="t" style="right:200px;top:348.85px;font-size:11.4px;color:#111;font-weight:normal;">$0.00</div>
<div class="t" style="left:834px;top:348.85px;font-size:11.4px;color:#111;font-weight:normal;">Prorated</div>
<div class="t" style="left:886px;top:348.85px;font-size:11.4px;color:#111;font-weight:normal;">Standard</div>
<div class="t" style="left:-15.200000000000003px;width:200px;text-align:center;top:363.90px;font-size:10.4px;color:#2a2a3a;font-weight:normal;letter-spacing:-0.7px">12</div>
<div class="t" style="left:136px;top:364.85px;font-size:11.4px;color:#111;font-weight:normal;">Site Grading Contractor</div>
<div class="t" style="left:375px;top:364.85px;font-size:11.4px;color:#111;font-weight:normal;">Work</div>
<div class="t" style="left:500px;top:364.85px;font-size:11.4px;color:#111;font-weight:normal;">S</div>
<div class="t" style="right:372px;top:364.85px;font-size:11.4px;color:#111;font-weight:normal;">100%</div>
<div class="t" style="right:314px;top:364.85px;font-size:11.4px;color:#111;font-weight:normal;">$60.00/hr</div>
<div class="t" style="right:257px;top:364.85px;font-size:11.4px;color:#111;font-weight:normal;">$0.00/hr</div>
<div class="t" style="right:200px;top:364.85px;font-size:11.4px;color:#111;font-weight:normal;">$0.00</div>
<div class="t" style="left:834px;top:364.85px;font-size:11.4px;color:#111;font-weight:normal;">Prorated</div>
<div class="t" style="left:886px;top:364.85px;font-size:11.4px;color:#111;font-weight:normal;">Standard</div>
<div class="t" style="left:-15.200000000000003px;width:200px;text-align:center;top:379.90px;font-size:10.4px;color:#2a2a3a;font-weight:normal;letter-spacing:-0.7px">13</div>
<div class="t" style="left:136px;top:380.85px;font-size:11.4px;color:#111;font-weight:normal;">G.C. Rough Carpenter Crew</div>
<div class="t" style="left:375px;top:380.85px;font-size:11.4px;color:#111;font-weight:normal;">Work</div>
<div class="t" style="left:500px;top:380.85px;font-size:11.4px;color:#111;font-weight:normal;">G</div>
<div class="t" style="right:372px;top:380.85px;font-size:11.4px;color:#111;font-weight:normal;">100%</div>
<div class="t" style="right:314px;top:380.85px;font-size:11.4px;color:#111;font-weight:normal;">$50.00/hr</div>
<div class="t" style="right:257px;top:380.85px;font-size:11.4px;color:#111;font-weight:normal;">$0.00/hr</div>
<div class="t" style="right:200px;top:380.85px;font-size:11.4px;color:#111;font-weight:normal;">$0.00</div>
<div class="t" style="left:834px;top:380.85px;font-size:11.4px;color:#111;font-weight:normal;">Prorated</div>
<div class="t" style="left:886px;top:380.85px;font-size:11.4px;color:#111;font-weight:normal;">Standard</div>
<div class="t" style="left:-15.200000000000003px;width:200px;text-align:center;top:395.90px;font-size:10.4px;color:#2a2a3a;font-weight:normal;letter-spacing:-0.7px">14</div>
<div class="t" style="left:136px;top:396.85px;font-size:11.4px;color:#111;font-weight:normal;">G.C. Concrete Crew</div>
<div class="t" style="left:375px;top:396.85px;font-size:11.4px;color:#111;font-weight:normal;">Work</div>
<div class="t" style="left:500px;top:396.85px;font-size:11.4px;color:#111;font-weight:normal;">G</div>
<div class="t" style="right:372px;top:396.85px;font-size:11.4px;color:#111;font-weight:normal;">100%</div>
<div class="t" style="right:314px;top:396.85px;font-size:11.4px;color:#111;font-weight:normal;">$50.00/hr</div>
<div class="t" style="right:257px;top:396.85px;font-size:11.4px;color:#111;font-weight:normal;">$0.00/hr</div>
<div class="t" style="right:200px;top:396.85px;font-size:11.4px;color:#111;font-weight:normal;">$0.00</div>
<div class="t" style="left:834px;top:396.85px;font-size:11.4px;color:#111;font-weight:normal;">Prorated</div>
<div class="t" style="left:886px;top:396.85px;font-size:11.4px;color:#111;font-weight:normal;">Standard</div>
<div class="t" style="left:-15.200000000000003px;width:200px;text-align:center;top:411.90px;font-size:10.4px;color:#2a2a3a;font-weight:normal;letter-spacing:-0.7px">15</div>
<div class="t" style="left:136px;top:412.77px;font-size:10.9px;color:#ff0000;font-weight:bold;">G.C. Labor Crew</div>
<div class="t" style="left:375px;top:412.77px;font-size:10.9px;color:#ff0000;font-weight:bold;">Work</div>
<div class="t" style="left:500px;top:412.77px;font-size:10.9px;color:#ff0000;font-weight:bold;">G</div>
<div class="t" style="right:372px;top:412.77px;font-size:10.9px;color:#ff0000;font-weight:bold;">100%</div>
<div class="t" style="right:314px;top:412.77px;font-size:10.9px;color:#ff0000;font-weight:bold;">$50.00/hr</div>
<div class="t" style="right:257px;top:412.77px;font-size:10.9px;color:#ff0000;font-weight:bold;">$0.00/hr</div>
<div class="t" style="right:200px;top:412.77px;font-size:10.9px;color:#ff0000;font-weight:bold;">$0.00</div>
<div class="t" style="left:834px;top:412.77px;font-size:10.9px;color:#ff0000;font-weight:bold;">Prorated</div>
<div class="t" style="left:886px;top:412.77px;font-size:10.9px;color:#ff0000;font-weight:bold;">Standard</div>
<svg class="r" style="left:104px;top:412px" width="12" height="12" viewBox="0 0 12 12"><path d="M6.2 0.5 L11.6 6 L6.2 11.4 L0.8 6 Z" fill="#ffff00" stroke="#545410" stroke-width="0.9"/><path d="M5.4 2.6 h1.6 l-0.35 5.4 h-0.9 z" fill="#000"/><rect x="5.6" y="8.6" width="1.2" height="1.2" fill="#000"/></svg>
<div class="t" style="left:-15.200000000000003px;width:200px;text-align:center;top:427.90px;font-size:10.4px;color:#2a2a3a;font-weight:normal;letter-spacing:-0.7px">16</div>
<div class="t" style="left:136px;top:428.85px;font-size:11.4px;color:#111;font-weight:normal;">Elevator Contractor</div>
<div class="t" style="left:375px;top:428.85px;font-size:11.4px;color:#111;font-weight:normal;">Work</div>
<div class="t" style="left:500px;top:428.85px;font-size:11.4px;color:#111;font-weight:normal;">E</div>
<div class="t" style="right:372px;top:428.85px;font-size:11.4px;color:#111;font-weight:normal;">100%</div>
<div class="t" style="right:314px;top:428.85px;font-size:11.4px;color:#111;font-weight:normal;">$60.00/hr</div>
<div class="t" style="right:257px;top:428.85px;font-size:11.4px;color:#111;font-weight:normal;">$0.00/hr</div>
<div class="t" style="right:200px;top:428.85px;font-size:11.4px;color:#111;font-weight:normal;">$0.00</div>
<div class="t" style="left:834px;top:428.85px;font-size:11.4px;color:#111;font-weight:normal;">Prorated</div>
<div class="t" style="left:886px;top:428.85px;font-size:11.4px;color:#111;font-weight:normal;">Standard</div>
<div class="t" style="left:-15.200000000000003px;width:200px;text-align:center;top:443.90px;font-size:10.4px;color:#2a2a3a;font-weight:normal;letter-spacing:-0.7px">17</div>
<div class="t" style="left:136px;top:444.85px;font-size:11.4px;color:#111;font-weight:normal;">G.C. Finish Carpenter Crew</div>
<div class="t" style="left:375px;top:444.85px;font-size:11.4px;color:#111;font-weight:normal;">Work</div>
<div class="t" style="left:500px;top:444.85px;font-size:11.4px;color:#111;font-weight:normal;">G</div>
<div class="t" style="right:372px;top:444.85px;font-size:11.4px;color:#111;font-weight:normal;">100%</div>
<div class="t" style="right:314px;top:444.85px;font-size:11.4px;color:#111;font-weight:normal;">$50.00/hr</div>
<div class="t" style="right:257px;top:444.85px;font-size:11.4px;color:#111;font-weight:normal;">$0.00/hr</div>
<div class="t" style="right:200px;top:444.85px;font-size:11.4px;color:#111;font-weight:normal;">$0.00</div>
<div class="t" style="left:834px;top:444.85px;font-size:11.4px;color:#111;font-weight:normal;">Prorated</div>
<div class="t" style="left:886px;top:444.85px;font-size:11.4px;color:#111;font-weight:normal;">Standard</div>
<div class="t" style="left:-15.200000000000003px;width:200px;text-align:center;top:459.90px;font-size:10.4px;color:#2a2a3a;font-weight:normal;letter-spacing:-0.7px">18</div>
<div class="t" style="left:136px;top:460.77px;font-size:10.9px;color:#ff0000;font-weight:bold;">HVAC Contractor</div>
<div class="t" style="left:375px;top:460.77px;font-size:10.9px;color:#ff0000;font-weight:bold;">Work</div>
<div class="t" style="left:500px;top:460.77px;font-size:10.9px;color:#ff0000;font-weight:bold;">H</div>
<div class="t" style="right:372px;top:460.77px;font-size:10.9px;color:#ff0000;font-weight:bold;">100%</div>
<div class="t" style="right:314px;top:460.77px;font-size:10.9px;color:#ff0000;font-weight:bold;">$60.00/hr</div>
<div class="t" style="right:257px;top:460.77px;font-size:10.9px;color:#ff0000;font-weight:bold;">$0.00/hr</div>
<div class="t" style="right:200px;top:460.77px;font-size:10.9px;color:#ff0000;font-weight:bold;">$0.00</div>
<div class="t" style="left:834px;top:460.77px;font-size:10.9px;color:#ff0000;font-weight:bold;">Prorated</div>
<div class="t" style="left:886px;top:460.77px;font-size:10.9px;color:#ff0000;font-weight:bold;">Standard</div>
<svg class="r" style="left:104px;top:460px" width="12" height="12" viewBox="0 0 12 12"><path d="M6.2 0.5 L11.6 6 L6.2 11.4 L0.8 6 Z" fill="#ffff00" stroke="#545410" stroke-width="0.9"/><path d="M5.4 2.6 h1.6 l-0.35 5.4 h-0.9 z" fill="#000"/><rect x="5.6" y="8.6" width="1.2" height="1.2" fill="#000"/></svg>
<div class="t" style="left:-15.200000000000003px;width:200px;text-align:center;top:475.90px;font-size:10.4px;color:#2a2a3a;font-weight:normal;letter-spacing:-0.7px">19</div>
<div class="t" style="left:136px;top:476.85px;font-size:11.4px;color:#111;font-weight:normal;">Drywall Contractor</div>
<div class="t" style="left:375px;top:476.85px;font-size:11.4px;color:#111;font-weight:normal;">Work</div>
<div class="t" style="left:500px;top:476.85px;font-size:11.4px;color:#111;font-weight:normal;">D</div>
<div class="t" style="right:372px;top:476.85px;font-size:11.4px;color:#111;font-weight:normal;">100%</div>
<div class="t" style="right:314px;top:476.85px;font-size:11.4px;color:#111;font-weight:normal;">$60.00/hr</div>
<div class="t" style="right:257px;top:476.85px;font-size:11.4px;color:#111;font-weight:normal;">$0.00/hr</div>
<div class="t" style="right:200px;top:476.85px;font-size:11.4px;color:#111;font-weight:normal;">$0.00</div>
<div class="t" style="left:834px;top:476.85px;font-size:11.4px;color:#111;font-weight:normal;">Prorated</div>
<div class="t" style="left:886px;top:476.85px;font-size:11.4px;color:#111;font-weight:normal;">Standard</div>
<div class="t" style="left:-15.200000000000003px;width:200px;text-align:center;top:491.90px;font-size:10.4px;color:#2a2a3a;font-weight:normal;letter-spacing:-0.7px">20</div>
<div class="t" style="left:136px;top:492.85px;font-size:11.4px;color:#111;font-weight:normal;">Painting Contractor</div>
<div class="t" style="left:375px;top:492.85px;font-size:11.4px;color:#111;font-weight:normal;">Work</div>
<div class="t" style="left:500px;top:492.85px;font-size:11.4px;color:#111;font-weight:normal;">P</div>
<div class="t" style="right:372px;top:492.85px;font-size:11.4px;color:#111;font-weight:normal;">100%</div>
<div class="t" style="right:314px;top:492.85px;font-size:11.4px;color:#111;font-weight:normal;">$70.00/hr</div>
<div class="t" style="right:257px;top:492.85px;font-size:11.4px;color:#111;font-weight:normal;">$0.00/hr</div>
<div class="t" style="right:200px;top:492.85px;font-size:11.4px;color:#111;font-weight:normal;">$0.00</div>
<div class="t" style="left:834px;top:492.85px;font-size:11.4px;color:#111;font-weight:normal;">Prorated</div>
<div class="t" style="left:886px;top:492.85px;font-size:11.4px;color:#111;font-weight:normal;">Standard</div>
<div class="t" style="left:-15.200000000000003px;width:200px;text-align:center;top:507.90px;font-size:10.4px;color:#2a2a3a;font-weight:normal;letter-spacing:-0.7px">21</div>
<div class="t" style="left:136px;top:508.85px;font-size:11.4px;color:#111;font-weight:normal;">Carpet Contractor</div>
<div class="t" style="left:375px;top:508.85px;font-size:11.4px;color:#111;font-weight:normal;">Work</div>
<div class="t" style="left:500px;top:508.85px;font-size:11.4px;color:#111;font-weight:normal;">C</div>
<div class="t" style="right:372px;top:508.85px;font-size:11.4px;color:#111;font-weight:normal;">100%</div>
<div class="t" style="right:314px;top:508.85px;font-size:11.4px;color:#111;font-weight:normal;">$60.00/hr</div>
<div class="t" style="right:257px;top:508.85px;font-size:11.4px;color:#111;font-weight:normal;">$0.00/hr</div>
<div class="t" style="right:200px;top:508.85px;font-size:11.4px;color:#111;font-weight:normal;">$0.00</div>
<div class="t" style="left:834px;top:508.85px;font-size:11.4px;color:#111;font-weight:normal;">Prorated</div>
<div class="t" style="left:886px;top:508.85px;font-size:11.4px;color:#111;font-weight:normal;">Standard</div>
<div class="t" style="left:-15.200000000000003px;width:200px;text-align:center;top:523.90px;font-size:10.4px;color:#2a2a3a;font-weight:normal;letter-spacing:-0.7px">22</div>
<div class="t" style="left:136px;top:524.85px;font-size:11.4px;color:#111;font-weight:normal;">Landscape Contractor</div>
<div class="t" style="left:375px;top:524.85px;font-size:11.4px;color:#111;font-weight:normal;">Work</div>
<div class="t" style="left:500px;top:524.85px;font-size:11.4px;color:#111;font-weight:normal;">L</div>
<div class="t" style="right:372px;top:524.85px;font-size:11.4px;color:#111;font-weight:normal;">100%</div>
<div class="t" style="right:314px;top:524.85px;font-size:11.4px;color:#111;font-weight:normal;">$60.00/hr</div>
<div class="t" style="right:257px;top:524.85px;font-size:11.4px;color:#111;font-weight:normal;">$0.00/hr</div>
<div class="t" style="right:200px;top:524.85px;font-size:11.4px;color:#111;font-weight:normal;">$0.00</div>
<div class="t" style="left:834px;top:524.85px;font-size:11.4px;color:#111;font-weight:normal;">Prorated</div>
<div class="t" style="left:886px;top:524.85px;font-size:11.4px;color:#111;font-weight:normal;">Standard</div>
<div class="t" style="left:-15.200000000000003px;width:200px;text-align:center;top:539.90px;font-size:10.4px;color:#2a2a3a;font-weight:normal;letter-spacing:-0.7px">23</div>
<div class="t" style="left:136px;top:540.85px;font-size:11.4px;color:#111;font-weight:normal;">Tile Contractor</div>
<div class="t" style="left:375px;top:540.85px;font-size:11.4px;color:#111;font-weight:normal;">Work</div>
<div class="t" style="left:500px;top:540.85px;font-size:11.4px;color:#111;font-weight:normal;">T</div>
<div class="t" style="right:372px;top:540.85px;font-size:11.4px;color:#111;font-weight:normal;">100%</div>
<div class="t" style="right:314px;top:540.85px;font-size:11.4px;color:#111;font-weight:normal;">$60.00/hr</div>
<div class="t" style="right:257px;top:540.85px;font-size:11.4px;color:#111;font-weight:normal;">$0.00/hr</div>
<div class="t" style="right:200px;top:540.85px;font-size:11.4px;color:#111;font-weight:normal;">$0.00</div>
<div class="t" style="left:834px;top:540.85px;font-size:11.4px;color:#111;font-weight:normal;">Prorated</div>
<div class="t" style="left:886px;top:540.85px;font-size:11.4px;color:#111;font-weight:normal;">Standard</div>
<div class="t" style="left:-15.200000000000003px;width:200px;text-align:center;top:555.90px;font-size:10.4px;color:#2a2a3a;font-weight:normal;letter-spacing:-0.7px">24</div>
<div class="t" style="left:136px;top:556.77px;font-size:10.9px;color:#ff0000;font-weight:bold;">G.C. Superintendent</div>
<div class="t" style="left:375px;top:556.77px;font-size:10.9px;color:#ff0000;font-weight:bold;">Work</div>
<div class="t" style="left:500px;top:556.77px;font-size:10.9px;color:#ff0000;font-weight:bold;">G</div>
<div class="t" style="right:372px;top:556.77px;font-size:10.9px;color:#ff0000;font-weight:bold;">100%</div>
<div class="t" style="right:314px;top:556.77px;font-size:10.9px;color:#ff0000;font-weight:bold;">$60.00/hr</div>
<div class="t" style="right:257px;top:556.77px;font-size:10.9px;color:#ff0000;font-weight:bold;">$0.00/hr</div>
<div class="t" style="right:200px;top:556.77px;font-size:10.9px;color:#ff0000;font-weight:bold;">$0.00</div>
<div class="t" style="left:834px;top:556.77px;font-size:10.9px;color:#ff0000;font-weight:bold;">Prorated</div>
<div class="t" style="left:886px;top:556.77px;font-size:10.9px;color:#ff0000;font-weight:bold;">Standard</div>
<svg class="r" style="left:104px;top:556px" width="12" height="12" viewBox="0 0 12 12"><path d="M6.2 0.5 L11.6 6 L6.2 11.4 L0.8 6 Z" fill="#ffff00" stroke="#545410" stroke-width="0.9"/><path d="M5.4 2.6 h1.6 l-0.35 5.4 h-0.9 z" fill="#000"/><rect x="5.6" y="8.6" width="1.2" height="1.2" fill="#000"/></svg>
<div class="t" style="left:-15.200000000000003px;width:200px;text-align:center;top:571.90px;font-size:10.4px;color:#2a2a3a;font-weight:normal;letter-spacing:-0.7px">25</div>
<div class="t" style="left:136px;top:572.85px;font-size:11.4px;color:#111;font-weight:normal;">G.C Scheduler</div>
<div class="t" style="left:375px;top:572.85px;font-size:11.4px;color:#111;font-weight:normal;">Work</div>
<div class="t" style="left:500px;top:572.85px;font-size:11.4px;color:#111;font-weight:normal;">G</div>
<div class="t" style="right:372px;top:572.85px;font-size:11.4px;color:#111;font-weight:normal;">100%</div>
<div class="t" style="right:314px;top:572.85px;font-size:11.4px;color:#111;font-weight:normal;">$60.00/hr</div>
<div class="t" style="right:257px;top:572.85px;font-size:11.4px;color:#111;font-weight:normal;">$0.00/hr</div>
<div class="t" style="right:200px;top:572.85px;font-size:11.4px;color:#111;font-weight:normal;">$0.00</div>
<div class="t" style="left:834px;top:572.85px;font-size:11.4px;color:#111;font-weight:normal;">Prorated</div>
<div class="t" style="left:886px;top:572.85px;font-size:11.4px;color:#111;font-weight:normal;">Standard</div>
<div class="t" style="left:-15.200000000000003px;width:200px;text-align:center;top:587.90px;font-size:10.4px;color:#2a2a3a;font-weight:normal;letter-spacing:-0.7px">26</div>
<div class="t" style="left:136px;top:588.85px;font-size:11.4px;color:#111;font-weight:normal;">G.C Procurement</div>
<div class="t" style="left:375px;top:588.85px;font-size:11.4px;color:#111;font-weight:normal;">Work</div>
<div class="t" style="left:500px;top:588.85px;font-size:11.4px;color:#111;font-weight:normal;">G</div>
<div class="t" style="right:372px;top:588.85px;font-size:11.4px;color:#111;font-weight:normal;">100%</div>
<div class="t" style="right:314px;top:588.85px;font-size:11.4px;color:#111;font-weight:normal;">$60.00/hr</div>
<div class="t" style="right:257px;top:588.85px;font-size:11.4px;color:#111;font-weight:normal;">$0.00/hr</div>
<div class="t" style="right:200px;top:588.85px;font-size:11.4px;color:#111;font-weight:normal;">$0.00</div>
<div class="t" style="left:834px;top:588.85px;font-size:11.4px;color:#111;font-weight:normal;">Prorated</div>
<div class="t" style="left:886px;top:588.85px;font-size:11.4px;color:#111;font-weight:normal;">Standard</div>
<div class="t" style="left:-15.200000000000003px;width:200px;text-align:center;top:603.90px;font-size:10.4px;color:#2a2a3a;font-weight:normal;letter-spacing:-0.7px">27</div>
<div class="t" style="left:136px;top:604.85px;font-size:11.4px;color:#111;font-weight:normal;">Steel Erection Contractor</div>
<div class="t" style="left:375px;top:604.85px;font-size:11.4px;color:#111;font-weight:normal;">Work</div>
<div class="t" style="left:500px;top:604.85px;font-size:11.4px;color:#111;font-weight:normal;">S</div>
<div class="t" style="right:372px;top:604.85px;font-size:11.4px;color:#111;font-weight:normal;">100%</div>
<div class="t" style="right:314px;top:604.85px;font-size:11.4px;color:#111;font-weight:normal;">$60.00/hr</div>
<div class="t" style="right:257px;top:604.85px;font-size:11.4px;color:#111;font-weight:normal;">$0.00/hr</div>
<div class="t" style="right:200px;top:604.85px;font-size:11.4px;color:#111;font-weight:normal;">$0.00</div>
<div class="t" style="left:834px;top:604.85px;font-size:11.4px;color:#111;font-weight:normal;">Prorated</div>
<div class="t" style="left:886px;top:604.85px;font-size:11.4px;color:#111;font-weight:normal;">Standard</div>
<div class="t" style="left:-15.200000000000003px;width:200px;text-align:center;top:619.90px;font-size:10.4px;color:#2a2a3a;font-weight:normal;letter-spacing:-0.7px">28</div>
<div class="t" style="left:136px;top:620.85px;font-size:11.4px;color:#111;font-weight:normal;">Paving Contractor</div>
<div class="t" style="left:375px;top:620.85px;font-size:11.4px;color:#111;font-weight:normal;">Work</div>
<div class="t" style="left:500px;top:620.85px;font-size:11.4px;color:#111;font-weight:normal;">P</div>
<div class="t" style="right:372px;top:620.85px;font-size:11.4px;color:#111;font-weight:normal;">100%</div>
<div class="t" style="right:314px;top:620.85px;font-size:11.4px;color:#111;font-weight:normal;">$60.00/hr</div>
<div class="t" style="right:257px;top:620.85px;font-size:11.4px;color:#111;font-weight:normal;">$0.00/hr</div>
<div class="t" style="right:200px;top:620.85px;font-size:11.4px;color:#111;font-weight:normal;">$0.00</div>
<div class="t" style="left:834px;top:620.85px;font-size:11.4px;color:#111;font-weight:normal;">Prorated</div>
<div class="t" style="left:886px;top:620.85px;font-size:11.4px;color:#111;font-weight:normal;">Standard</div>
<div class="t" style="left:-15.200000000000003px;width:200px;text-align:center;top:635.90px;font-size:10.4px;color:#2a2a3a;font-weight:normal;letter-spacing:-0.7px">29</div>
<div class="t" style="left:136px;top:636.85px;font-size:11.4px;color:#111;font-weight:normal;">G.C Accounting</div>
<div class="t" style="left:375px;top:636.85px;font-size:11.4px;color:#111;font-weight:normal;">Work</div>
<div class="t" style="left:500px;top:636.85px;font-size:11.4px;color:#111;font-weight:normal;">G</div>
<div class="t" style="right:372px;top:636.85px;font-size:11.4px;color:#111;font-weight:normal;">100%</div>
<div class="t" style="right:314px;top:636.85px;font-size:11.4px;color:#111;font-weight:normal;">$60.00/hr</div>
<div class="t" style="right:257px;top:636.85px;font-size:11.4px;color:#111;font-weight:normal;">$0.00/hr</div>
<div class="t" style="right:200px;top:636.85px;font-size:11.4px;color:#111;font-weight:normal;">$0.00</div>
<div class="t" style="left:834px;top:636.85px;font-size:11.4px;color:#111;font-weight:normal;">Prorated</div>
<div class="t" style="left:886px;top:636.85px;font-size:11.4px;color:#111;font-weight:normal;">Standard</div>
<div class="t" style="left:-15.200000000000003px;width:200px;text-align:center;top:651.90px;font-size:10.4px;color:#2a2a3a;font-weight:normal;letter-spacing:-0.7px">30</div>
<div class="t" style="left:136px;top:652.85px;font-size:11.4px;color:#111;font-weight:normal;">Concrete</div>
<div class="t" style="left:375px;top:652.85px;font-size:11.4px;color:#111;font-weight:normal;">Material</div>
<div class="t" style="left:432px;top:652.85px;font-size:11.4px;color:#111;font-weight:normal;">ton</div>
<div class="t" style="left:500px;top:652.85px;font-size:11.4px;color:#111;font-weight:normal;">C</div>
<div class="t" style="right:314px;top:652.85px;font-size:11.4px;color:#111;font-weight:normal;">$30.00</div>
<div class="t" style="right:200px;top:652.85px;font-size:11.4px;color:#111;font-weight:normal;">$0.00</div>
<div class="t" style="left:834px;top:652.85px;font-size:11.4px;color:#111;font-weight:normal;">Prorated</div>
<div class="t" style="left:-15.200000000000003px;width:200px;text-align:center;top:667.90px;font-size:10.4px;color:#2a2a3a;font-weight:normal;letter-spacing:-0.7px">31</div>
<div class="t" style="left:136px;top:668.85px;font-size:11.4px;color:#111;font-weight:normal;">Painting Material</div>
<div class="t" style="left:375px;top:668.85px;font-size:11.4px;color:#111;font-weight:normal;">Material</div>
<div class="t" style="left:432px;top:668.85px;font-size:11.4px;color:#111;font-weight:normal;">Liter</div>
<div class="t" style="left:500px;top:668.85px;font-size:11.4px;color:#111;font-weight:normal;">P</div>
<div class="t" style="right:314px;top:668.85px;font-size:11.4px;color:#111;font-weight:normal;">$15.00</div>
<div class="t" style="right:200px;top:668.85px;font-size:11.4px;color:#111;font-weight:normal;">$0.00</div>
<div class="t" style="left:834px;top:668.85px;font-size:11.4px;color:#111;font-weight:normal;">Prorated</div>
<div class="r" style="left:101px;top:185px;width:32px;height:17px;background:transparent;box-sizing:border-box;border:2px solid #2e7a2e;"></div>
<svg class="r" style="left:0;top:0" width="71" height="682" viewBox="0 0 71 682"><defs><linearGradient id="wtitle" x1="0" y1="0" x2="1" y2="0"><stop offset="0" stop-color="#a8c4f8"/><stop offset="0.6" stop-color="#80b8f0"/><stop offset="1" stop-color="#2060e0"/></linearGradient><linearGradient id="wline" x1="0" y1="0" x2="1" y2="0"><stop offset="0" stop-color="#40a0f0"/><stop offset="0.5" stop-color="#3070e8"/><stop offset="1" stop-color="#2030c8"/></linearGradient><linearGradient id="wbody" x1="0" y1="0" x2="1" y2="1"><stop offset="0" stop-color="#ffffff"/><stop offset="1" stop-color="#c8d8f8"/></linearGradient><linearGradient id="hl" x1="0" y1="0" x2="0" y2="1"><stop offset="0" stop-color="#fff0b8"/><stop offset="1" stop-color="#fde28a"/></linearGradient></defs><rect x="1" y="156" width="1" height="526" fill="#6e6e6e"/><rect x="1" y="156" width="62" height="1" fill="#555"/><rect x="62" y="157" width="2" height="525" fill="#e8e8e8"/><rect x="64" y="157" width="6" height="525" fill="#a4a4a4"/><rect x="70" y="157" width="1" height="525" fill="#8e8e8e"/><g transform="translate(20 166)"><rect x="1" y="2" width="25" height="21" fill="#0a2a6a"/><rect x="0" y="1" width="24.5" height="21" fill="#eef2fb" stroke="#9aa6c4" stroke-width="0.6"/><rect x="0" y="1" width="24.5" height="3.5" fill="url(#wtitle)"/><rect x="0" y="4.5" width="24.5" height="1" fill="#1a50d8"/><rect x="2.0" y="0" width="1.6" height="3" fill="#444"/><rect x="5.2" y="0" width="1.6" height="3" fill="#444"/><rect x="8.4" y="0" width="1.6" height="3" fill="#444"/><rect x="11.600000000000001" y="0" width="1.6" height="3" fill="#444"/><rect x="14.8" y="0" width="1.6" height="3" fill="#444"/><rect x="18.0" y="0" width="1.6" height="3" fill="#444"/><rect x="21.200000000000003" y="0" width="1.6" height="3" fill="#444"/><path d="M6.3 5.5 V22 M12.5 5.5 V22 M18.6 5.5 V22 M0 9.8 H24.5 M0 14 H24.5 M0 18 H24.5" stroke="#b0b0b8" stroke-width="0.8"/><rect x="3.5" y="7.5" width="7.5" height="2.2" rx="0.8" fill="#3a8ee0"/><rect x="12.5" y="10.5" width="6" height="4.8" fill="none" stroke="#f5a020" stroke-width="1.2"/></g><g transform="translate(21 231)"><rect x="1" y="1" width="24.5" height="21.5" fill="#0a2a6a"/><rect x="0" y="0" width="24" height="21" fill="#fff" stroke="#7a9ad8" stroke-width="0.6"/><rect x="0" y="0" width="24" height="4.5" fill="#3aa0f0"/><rect x="14" y="0" width="10" height="4.5" fill="#3050e0"/><rect x="0.3" y="4.5" width="4.3" height="16.3" fill="#fff"/><path d="M0.5 8 H4.5 M0.5 11 H4.5 M0.5 14 H4.5 M0.5 17 H4.5" stroke="#c0c8e0" stroke-width="0.6"/><rect x="1" y="1" width="2.5" height="2.5" fill="#c0e0ff"/><rect x="5" y="6" width="3" height="1.8" fill="#0000c8"/><rect x="9" y="6" width="3" height="1.8" fill="#0000c8"/><rect x="13" y="6" width="3" height="1.8" fill="#0000c8"/><rect x="5" y="8.8" width="3" height="1.8" fill="#101010"/><rect x="9" y="8.8" width="3" height="1.8" fill="#101010"/><rect x="13" y="8.8" width="3" height="1.8" fill="#0000c8"/><rect x="5" y="11.6" width="3" height="1.8" fill="#0000c8"/><rect x="9" y="11.6" width="3" height="1.8" fill="#0000c8"/><rect x="13" y="11.6" width="3" height="1.8" fill="#0000c8"/><rect x="5" y="14.4" width="3" height="1.8" fill="#101010"/><rect x="9" y="14.4" width="3" height="1.8" fill="#101010"/><rect x="13" y="14.4" width="3" height="1.8" fill="#0000c8"/><rect x="5" y="17.2" width="3" height="1.8" fill="#0000c8"/><rect x="9" y="17.2" width="3" height="1.8" fill="#0000c8"/><rect x="13" y="17.2" width="3" height="1.8" fill="#0000c8"/><circle cx="19" cy="13" r="3.8" fill="#c8c8c8" stroke="#222" stroke-width="1"/><path d="M13.5 23 Q13.5 16.5 19 16.5 Q24.5 16.5 24.5 23 Z" fill="#1840d0" stroke="#00108a" stroke-width="0.8"/><circle cx="16" cy="20" r="1.2" fill="#6ab0ff"/><circle cx="22" cy="20" r="1.2" fill="#6ab0ff"/></g><g transform="translate(21 556)"><rect x="1" y="1" width="24.5" height="21.5" fill="#0a2a6a"/><rect x="0" y="0" width="24" height="21" fill="#fff" stroke="#7a9ad8" stroke-width="0.6"/><rect x="0" y="0" width="24" height="4.5" fill="#3aa0f0"/><rect x="14" y="0" width="10" height="4.5" fill="#3050e0"/><rect x="0.3" y="4.5" width="4.3" height="16.3" fill="#fff"/><path d="M0.5 8 H4.5 M0.5 11 H4.5 M0.5 14 H4.5 M0.5 17 H4.5" stroke="#c0c8e0" stroke-width="0.6"/><rect x="1" y="1" width="2.5" height="2.5" fill="#c0e0ff"/><rect x="5" y="6" width="3" height="1.8" fill="#0000c8"/><rect x="9" y="6" width="3" height="1.8" fill="#0000c8"/><rect x="13" y="6" width="3" height="1.8" fill="#0000c8"/><rect x="5" y="8.8" width="3" height="1.8" fill="#101010"/><rect x="9" y="8.8" width="3" height="1.8" fill="#101010"/><rect x="13" y="8.8" width="3" height="1.8" fill="#0000c8"/><rect x="5" y="11.6" width="3" height="1.8" fill="#0000c8"/><rect x="9" y="11.6" width="3" height="1.8" fill="#0000c8"/><rect x="13" y="11.6" width="3" height="1.8" fill="#0000c8"/><rect x="5" y="14.4" width="3" height="1.8" fill="#101010"/><rect x="9" y="14.4" width="3" height="1.8" fill="#101010"/><rect x="13" y="14.4" width="3" height="1.8" fill="#0000c8"/><rect x="5" y="17.2" width="3" height="1.8" fill="#0000c8"/><rect x="9" y="17.2" width="3" height="1.8" fill="#0000c8"/><rect x="13" y="17.2" width="3" height="1.8" fill="#0000c8"/><circle cx="19" cy="13" r="3.8" fill="#c8c8c8" stroke="#222" stroke-width="1"/><path d="M13.5 23 Q13.5 16.5 19 16.5 Q24.5 16.5 24.5 23 Z" fill="#1840d0" stroke="#00108a" stroke-width="0.8"/><circle cx="16" cy="20" r="1.2" fill="#6ab0ff"/><circle cx="22" cy="20" r="1.2" fill="#6ab0ff"/></g><g transform="translate(20 297)"><rect x="1" y="1" width="25" height="21" fill="#0a2a6a"/><rect x="0" y="0" width="24.5" height="20.5" fill="url(#wbody)" stroke="#8aa0d0" stroke-width="0.6"/><rect x="0" y="0" width="24.5" height="4.5" fill="url(#wtitle)"/><rect x="0" y="4" width="24.5" height="1.2" fill="url(#wline)"/><rect x="0.5" y="5" width="5.3" height="16" fill="#e8ecf6"/><rect x="5.8" y="5" width="0.8" height="16" fill="#a0a8b8"/><path d="M0.5 9 H5.8 M0.5 13 H5.8 M0.5 17 H5.8" stroke="#b8c0cc" stroke-width="0.8"/><rect x="8" y="8.5" width="7" height="2.5" rx="1" fill="#2a8ae0"/><rect x="11" y="12.5" width="7.5" height="2.5" rx="1" fill="#2a8ae0"/><rect x="16" y="16" width="7" height="2.8" rx="1" fill="#2a8ae0"/></g><g transform="translate(20 491)"><rect x="1" y="1" width="25" height="21" fill="#0a2a6a"/><rect x="0" y="0" width="24.5" height="20.5" fill="url(#wbody)" stroke="#8aa0d0" stroke-width="0.6"/><rect x="0" y="0" width="24.5" height="4.5" fill="url(#wtitle)"/><rect x="0" y="4" width="24.5" height="1.2" fill="url(#wline)"/><rect x="0.5" y="5" width="5.3" height="16" fill="#e8ecf6"/><rect x="5.8" y="5" width="0.8" height="16" fill="#a0a8b8"/><path d="M0.5 9 H5.8 M0.5 13 H5.8 M0.5 17 H5.8" stroke="#b8c0cc" stroke-width="0.8"/><rect x="8" y="8.5" width="7" height="2.5" rx="1" fill="#2a8ae0"/><rect x="11" y="12.5" width="7.5" height="2.5" rx="1" fill="#2a8ae0"/><rect x="16" y="16" width="7" height="2.8" rx="1" fill="#2a8ae0"/></g><g transform="translate(20 360)"><rect x="1" y="1" width="25" height="22" fill="#0a2a6a"/><rect x="0" y="0" width="24.5" height="21.5" fill="url(#wbody)" stroke="#8aa0d0" stroke-width="0.6"/><rect x="0" y="0" width="24.5" height="4.5" fill="url(#wtitle)"/><rect x="0" y="4" width="24.5" height="1.2" fill="url(#wline)"/><path d="M3.5 9.5 H9 L10 8 H12 M13 8 V15 M13 13 H14 M19 10.5 H24 M19 15.5 H24 M13 19 H14" stroke="#9aaedc" stroke-width="0.8" fill="none"/><rect x="12.5" y="7.5" width="1.6" height="12" fill="#fff" stroke="#b0c0e0" stroke-width="0.5"/></g><g transform="translate(17.5 423.5)"><rect x="0" y="0" width="30" height="26.5" fill="url(#hl)"/><rect x="0" y="7" width="1.5" height="12" fill="#f5c000"/><rect x="28.5" y="7" width="1.5" height="12" fill="#f5c000"/></g><g transform="translate(20.5 427)"><rect x="1" y="1" width="24" height="19" fill="#0a2a6a"/><rect x="0" y="0" width="23.5" height="18.5" fill="url(#wbody)" stroke="#8aa0d0" stroke-width="0.6"/><rect x="0" y="0" width="23.5" height="4.5" fill="url(#wtitle)"/><rect x="0" y="4" width="23.5" height="1.2" fill="url(#wline)"/><path d="M0.5 7.7 H23.5 M0.5 11.3 H23.5 M0.5 15.2 H23.5 M2.4 4.5 V18.5 M6.3 4.5 V18.5 M12.4 4.5 V18.5 M18.2 4.5 V18.5" stroke="#c0c4d0" stroke-width="0.8"/><ellipse cx="20" cy="12.5" rx="3.6" ry="3.2" fill="#e8e8e8" stroke="#111" stroke-width="1.3"/><path d="M17 11 Q20 9 23 11" stroke="#000" stroke-width="1.2" fill="none"/><ellipse cx="21.5" cy="17.5" rx="3.2" ry="2.3" fill="#d01020"/><ellipse cx="16.5" cy="19.5" rx="3.2" ry="2.3" fill="#40b040"/></g><g transform="translate(20 620)"><rect x="1" y="1" width="25" height="21.5" fill="#0a2a6a"/><rect x="0" y="0" width="24.5" height="21.0" fill="url(#wbody)" stroke="#8aa0d0" stroke-width="0.6"/><rect x="0" y="0" width="24.5" height="4.5" fill="url(#wtitle)"/><rect x="0" y="4" width="24.5" height="1.2" fill="url(#wline)"/><rect x="3" y="9" width="17" height="9" fill="#f4f0f0" stroke="#c0b8b0" stroke-width="0.6"/><path d="M3.5 6 V9 M12 6 V9 M20 6 V9" stroke="#888" stroke-width="0.6"/><rect x="2.5" y="5.5" width="2" height="1" fill="#555"/><rect x="11" y="5.5" width="2" height="1" fill="#555"/><rect x="19" y="5.5" width="2" height="1" fill="#555"/><rect x="4.5" y="10.5" width="11" height="5.5" fill="#20a0a8"/><rect x="4.5" y="13.5" width="11" height="2.8" fill="#000c9a"/><rect x="7" y="12.5" width="6" height="1.2" fill="#fff"/></g></svg><div class="r" style="left:2px;top:157px;width:60px;height:525px;overflow:hidden"><div class="r" style="left:0;top:-157px;width:60px;height:682px"><div class="t" style="left:-70px;width:200px;text-align:center;top:197.88px;font-size:10.3px;letter-spacing:-0.35px;color:#222">Calendar</div><div class="t" style="left:-70px;width:200px;text-align:center;top:261.78px;font-size:10.3px;letter-spacing:-0.35px;color:#222">Enterprise</div><div class="t" style="left:-70px;width:200px;text-align:center;top:272.68px;font-size:10.3px;letter-spacing:-0.35px;color:#222">Team Plan...</div><div class="t" style="left:-70px;width:200px;text-align:center;top:327.58px;font-size:10.3px;letter-spacing:-0.35px;color:#222">Gantt Chart</div><div class="t" style="left:-70px;width:200px;text-align:center;top:390.78px;font-size:10.3px;letter-spacing:-0.35px;color:#222">Network</div><div class="t" style="left:-70px;width:200px;text-align:center;top:401.98px;font-size:10.3px;letter-spacing:-0.35px;color:#222">Diagram</div><div class="t" style="left:-70px;width:200px;text-align:center;top:455.98px;font-size:10.3px;letter-spacing:-0.35px;color:#222">Resource</div><div class="t" style="left:-70px;width:200px;text-align:center;top:466.48px;font-size:10.3px;letter-spacing:-0.35px;color:#222">Sheet</div><div class="t" style="left:-70px;width:200px;text-align:center;top:521.38px;font-size:10.3px;letter-spacing:-0.35px;color:#222">Risk View</div><div class="t" style="left:-70px;width:200px;text-align:center;top:585.58px;font-size:10.3px;letter-spacing:-0.35px;color:#222">Team</div><div class="t" style="left:-70px;width:200px;text-align:center;top:596.28px;font-size:10.3px;letter-spacing:-0.35px;color:#222">Planner</div><div class="t" style="left:-70px;width:200px;text-align:center;top:651.38px;font-size:10.3px;letter-spacing:-0.35px;color:#222">Timeline</div></div></div>
</body></html>
